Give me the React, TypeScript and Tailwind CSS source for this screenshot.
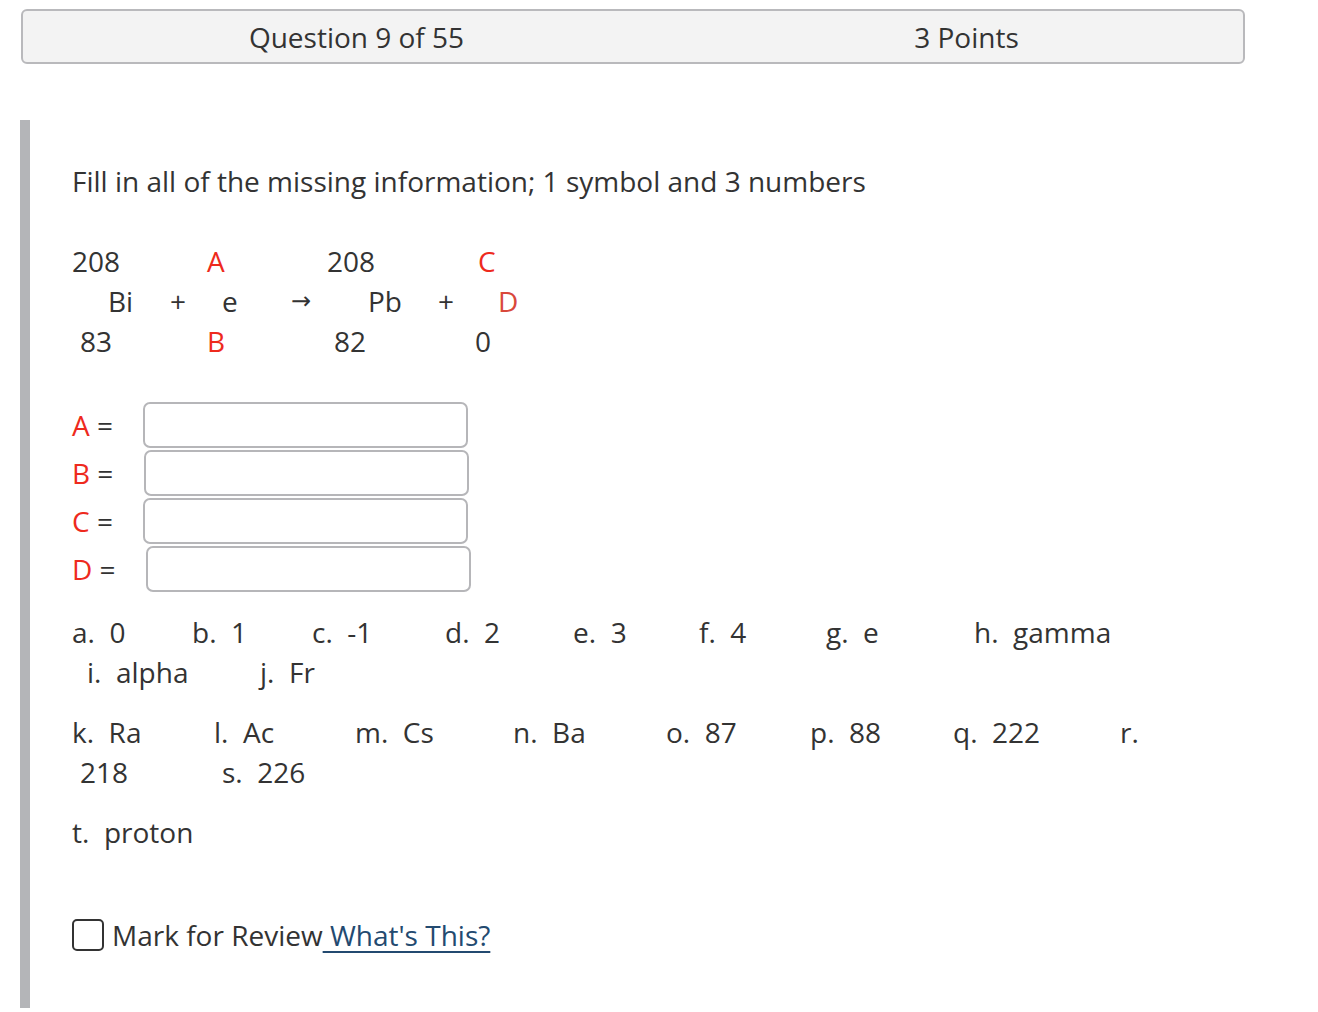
import React from "react";

const FONT = { fontFamily: '"Open Sans", "Liberation Sans", sans-serif' };

// option rows: [label, left offset within row (px from content start)]
const OPTS_1: [string, number][] = [
  ["a. 0", 0],
  ["b. 1", 120],
  ["c. -1", 240],
  ["d. 2", 373],
  ["e. 3", 501],
  ["f. 4", 627],
  ["g. e", 754],
  ["h. gamma", 902],
];

const OPTS_2: [string, number][] = [
  ["k. Ra", 0],
  ["l. Ac", 142],
  ["m. Cs", 283],
  ["n. Ba", 441],
  ["o. 87", 594],
  ["p. 88", 738],
  ["q. 222", 881],
  ["r.", 1048],
];

function OptionLine({ items }: { items: [string, number][] }) {
  return (
    <div className="flex h-10 items-center">
      {items.map(([label, left], i) => {
        const next = items[i + 1]?.[1];
        return (
          <span
            key={label}
            className="shrink-0 whitespace-pre"
            style={{ width: next !== undefined ? next - left : undefined }}
          >
            {label.replace(". ", ".  ")}
          </span>
        );
      })}
    </div>
  );
}

function AnswerRow({ letter, offset }: { letter: string; offset: string }) {
  return (
    <div className="flex h-12 items-center">
      <span className="w-[71px] shrink-0 whitespace-pre">
        <span className="text-[#ee2a1d]">{letter}</span> =
      </span>
      <input
        type="text"
        className={`h-[46px] w-[325px] rounded-[7px] border-2 border-[#b6b6b9] bg-white outline-none ${offset}`}
      />
    </div>
  );
}

export default function App() {
  return (
    <div className="min-h-[1012px] bg-white text-[28px] text-[#333333]" style={FONT}>
      <div className="pl-[21px] pt-[9px]">
        <div className="grid h-[55px] w-[1224px] grid-cols-[667px_1fr] items-center rounded-[6px] border-2 border-[#b9b9bc] bg-[#f3f3f3]">
          <span className="text-center">Question 9 of 55</span>
          <span className="text-center">3 Points</span>
        </div>
      </div>

      <div className="ml-[20px] mt-[56px] h-[888px] border-l-[10px] border-[#b4b5b8] pl-[42px] pt-[41px]">
        <p className="leading-10">Fill in all of the missing information; 1 symbol and 3 numbers</p>

        {/* nuclear equation */}
        <div className="mt-[40px] leading-10">
          <div className="flex">
            <span className="w-[135px] shrink-0">208</span>
            <span className="w-[120px] shrink-0 text-[#ee2a1d]">A</span>
            <span className="w-[151px] shrink-0">208</span>
            <span className="text-[#ee2a1d]">C</span>
          </div>
          <div className="flex pl-[36px]">
            <span className="w-[62px] shrink-0">Bi</span>
            <span className="w-[52px] shrink-0">+</span>
            <span className="w-[69px] shrink-0">e</span>
            <span
              className="w-[77px] shrink-0 text-[24px]"
              style={{ fontFamily: '"DejaVu Sans", sans-serif' }}
            >
              →
            </span>
            <span className="w-[70px] shrink-0">Pb</span>
            <span className="w-[60px] shrink-0">+</span>
            <span className="text-[#d9483b]">D</span>
          </div>
          <div className="flex pl-[8px]">
            <span className="w-[127px] shrink-0">83</span>
            <span className="w-[127px] shrink-0 text-[#ee2a1d]">B</span>
            <span className="w-[141px] shrink-0">82</span>
            <span>0</span>
          </div>
        </div>

        {/* answer boxes */}
        <div className="mt-[40px]">
          <AnswerRow letter="A" offset="" />
          <AnswerRow letter="B" offset="ml-px" />
          <AnswerRow letter="C" offset="" />
          <AnswerRow letter="D" offset="ml-[3px]" />
        </div>

        {/* choices */}
        <div className="mt-[19px]">
          <OptionLine items={OPTS_1} />
          <div className="flex h-10 items-center">
            <span className="w-[188px] shrink-0 whitespace-pre pl-[15px]">i.  alpha</span>
            <span className="whitespace-pre">j.  Fr</span>
          </div>
        </div>
        <div className="mt-[20px]">
          <OptionLine items={OPTS_2} />
          <div className="flex h-10 items-center">
            <span className="w-[150px] shrink-0 pl-[8px]">218</span>
            <span className="whitespace-pre">s.  226</span>
          </div>
        </div>
        <div className="mt-[20px] flex h-10 items-center whitespace-pre">t.  proton</div>

        {/* mark for review */}
        <div className="mt-[63px] flex h-10 items-center">
          <span className="mr-[8px] h-[32px] w-[32px] shrink-0 rounded-[5px] border-2 border-[#333333] bg-white" />
          <span>Mark for Review</span>
          <a
            href="#"
            className="whitespace-pre text-[#234a70] underline decoration-2 underline-offset-[5px]"
          >
            {" What's This?"}
          </a>
        </div>
      </div>
    </div>
  );
}
